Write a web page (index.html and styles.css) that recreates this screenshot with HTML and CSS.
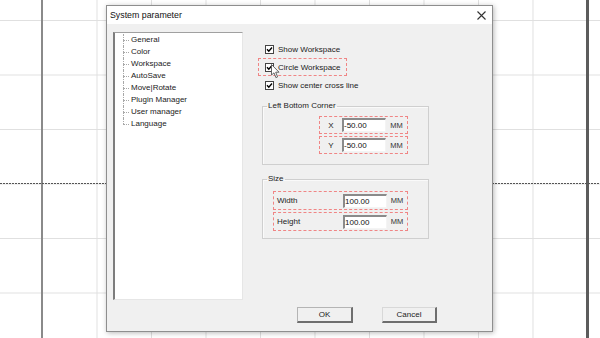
FILE: index.html
```html
<!DOCTYPE html>
<html>
<head>
<meta charset="utf-8">
<title>System parameter</title>
<link rel="stylesheet" href="styles.css">
</head>
<body>
<div class="desk">
  <div class="vline vline-left"></div>
  <div class="vline vline-right"></div>
  <div class="hdash"></div>

  <div class="dialog">
    <div class="titlebar">
      <span class="title">System parameter</span>
      <svg class="close" width="9" height="9" viewBox="0 0 9 9"><path d="M0.5 0.5 L8.5 8.5 M8.5 0.5 L0.5 8.5" stroke="#333" stroke-width="1.1" fill="none"/></svg>
    </div>
    <div class="body">
      <div class="main">
        <ul class="tree">
          <li>General</li>
          <li>Color</li>
          <li>Workspace</li>
          <li>AutoSave</li>
          <li>Move|Rotate</li>
          <li>Plugin Manager</li>
          <li>User manager</li>
          <li>Language</li>
        </ul>
        <div class="panel">
          <div class="check">
            <svg class="box" width="9" height="9" viewBox="0 0 9 9"><rect x="0.5" y="0.5" width="8" height="8" fill="#fff" stroke="#444"/><path d="M2 4.2 L3.8 6.2 L7 2.5" stroke="#000" stroke-width="1.4" fill="none"/></svg>
            <span>Show Workspace</span>
          </div>
          <div class="check focus">
            <svg class="box" width="9" height="9" viewBox="0 0 9 9"><rect x="0.5" y="0.5" width="8" height="8" fill="#fff" stroke="#444"/><path d="M2 4.2 L3.8 6.2 L7 2.5" stroke="#000" stroke-width="1.4" fill="none"/></svg>
            <span>Circle Workspace</span>
          </div>
          <div class="check">
            <svg class="box" width="9" height="9" viewBox="0 0 9 9"><rect x="0.5" y="0.5" width="8" height="8" fill="#fff" stroke="#444"/><path d="M2 4.2 L3.8 6.2 L7 2.5" stroke="#000" stroke-width="1.4" fill="none"/></svg>
            <span>Show center cross line</span>
          </div>

          <fieldset class="group group-corner">
            <legend>Left Bottom Corner</legend>
            <div class="field field-short">
              <span class="flabel center">X</span>
              <span class="input">-50.00</span>
              <span class="unit">MM</span>
            </div>
            <div class="field field-short">
              <span class="flabel center">Y</span>
              <span class="input">-50.00</span>
              <span class="unit">MM</span>
            </div>
          </fieldset>

          <fieldset class="group group-size">
            <legend>Size</legend>
            <div class="field field-long">
              <span class="flabel">Width</span>
              <span class="input">100.00</span>
              <span class="unit">MM</span>
            </div>
            <div class="field field-long">
              <span class="flabel">Height</span>
              <span class="input">100.00</span>
              <span class="unit">MM</span>
            </div>
          </fieldset>
        </div>
      </div>
      <div class="buttons">
        <button class="btn btn-ok">OK</button>
        <button class="btn btn-cancel">Cancel</button>
      </div>
    </div>
  </div>

  <svg class="cursor" width="10" height="15" viewBox="0 0 10 15"><path d="M0.5 0.5 L0.5 11 L3 8.8 L4.9 13.6 L6.6 12.9 L4.7 8.2 L8 8.2 Z" fill="#fff" stroke="#555" stroke-width="0.9" stroke-linejoin="round"/></svg>
</div>
</body>
</html>
```

FILE: styles.css
```css
html, body {
  margin: 0;
  padding: 0;
}

body {
  font-family: "Liberation Sans", Arial, sans-serif;
  background: #fff;
}

.desk {
  position: relative;
  width: 600px;
  height: 338px;
  overflow: hidden;
  background:
    linear-gradient(to right, #e0e0e0 1px, transparent 1px) 42px 0 / 54.5px 100%,
    linear-gradient(to bottom, #e0e0e0 1px, transparent 1px) 0 20px / 100% 54.5px,
    #fff;
}

.vline {
  position: absolute;
  top: 0;
  height: 338px;
}

.vline-left {
  left: 41px;
  width: 2px;
  background: #8a8a8a;
}

.vline-right {
  left: 586px;
  width: 3px;
  background: #5c5c5c;
}

.hdash {
  position: absolute;
  left: 0;
  top: 183px;
  width: 600px;
  height: 1px;
  background: repeating-linear-gradient(to right, #555 0 2px, transparent 2px 3px);
}

.dialog {
  position: absolute;
  left: 106px;
  top: 5px;
  width: 387px;
  height: 327px;
  box-sizing: border-box;
  border: 1px solid #8e8e8e;
  background: #f0f0f0;
  box-shadow: 1px 1px 5px rgba(0, 0, 0, 0.28);
  display: flex;
  flex-direction: column;
}

.titlebar {
  height: 18px;
  background: #fff;
  display: flex;
  align-items: center;
  justify-content: space-between;
  padding: 0 6px 0 3px;
}

.title {
  font-size: 8.8px;
  color: #111;
}

.close {
  display: block;
}

.body {
  flex: 1;
  display: flex;
  flex-direction: column;
  padding: 8px 6px 8px 6px;
}

.main {
  display: flex;
  height: 268px;
}

.tree {
  list-style: none;
  margin: 0;
  padding: 1px 0 0 0;
  width: 130px;
  height: 268px;
  box-sizing: border-box;
  background: #fff;
  border-top: 1px solid #a0a0a0;
  border-left: 2px solid #7d7d7d;
  border-right: 1px solid #e6e6e6;
  border-bottom: 1px solid #e6e6e6;
  font-size: 8px;
  color: #222;
}

.tree li {
  position: relative;
  height: 12px;
  line-height: 12px;
  padding-left: 16px;
}

.tree li::before {
  content: "";
  position: absolute;
  left: 8px;
  top: 6px;
  width: 6px;
  border-top: 1px dotted #a8a8a8;
}

.tree li::after {
  content: "";
  position: absolute;
  left: 8px;
  top: 0;
  height: 12px;
  border-left: 1px dotted #a8a8a8;
}

.tree li:last-child::after {
  height: 6px;
}

.panel {
  margin-left: 16px;
  padding-top: 8px;
  display: flex;
  flex-direction: column;
  align-items: flex-start;
  font-size: 8px;
  color: #222;
}

.check {
  height: 18px;
  box-sizing: border-box;
  display: flex;
  align-items: center;
  padding: 0 5px 0 6px;
  border: 1px solid transparent;
  margin-left: -1px;
}

.check .box {
  display: block;
  margin-right: 4px;
}

.check.focus {
  border: 1px dashed #f08585;
}

.group {
  margin: 7px 0 0 3px;
  width: 167px;
  box-sizing: border-box;
  border: 1px solid #cfcfcf;
  box-shadow: inset 1px 1px 0 #fafafa;
  display: flex;
  flex-direction: column;
  align-items: flex-end;
  gap: 2px;
  min-inline-size: 0;
}

.group legend {
  font-size: 8px;
  line-height: 10px;
  padding: 0 1px;
  margin-left: 4px;
  color: #222;
}

.group-corner {
  padding: 5px 20px 10px 0;
}

.group-size {
  margin-top: 9px;
  padding: 7px 20px 7px 0;
}

.field {
  display: flex;
  align-items: center;
  box-sizing: border-box;
  border: 1px dashed #f08585;
  height: 18px;
}

.field-long {
  height: 19px;
  width: 135px;
}

.field-short {
  width: 89px;
}

.flabel {
  flex: 1;
  padding-left: 3px;
}

.flabel.center {
  padding-left: 0;
  text-align: center;
}

.input {
  width: 44px;
  height: 14px;
  box-sizing: border-box;
  background: #fff;
  border-top: 2px solid #8a8a8a;
  border-left: 2px solid #8a8a8a;
  border-right: 1px solid #f4f4f4;
  border-bottom: 1px solid #f4f4f4;
  font-size: 8px;
  line-height: 11px;
  padding-left: 0;
  color: #111;
}

.unit {
  width: 20px;
  text-align: center;
  font-size: 7.5px;
  color: #333;
}

.field-short .unit {
  width: 21px;
}

.buttons {
  display: flex;
  margin-top: 7px;
  padding-left: 184px;
  gap: 29px;
}

.btn {
  height: 16px;
  box-sizing: border-box;
  margin: 0;
  padding: 0;
  background: #f0f0f0;
  border-top: 1px solid #b4b4b4;
  border-left: 1px solid #b4b4b4;
  border-right: 2px solid #6e6e6e;
  border-bottom: 2px solid #6e6e6e;
  font-family: "Liberation Sans", Arial, sans-serif;
  font-size: 8px;
  color: #222;
}

.btn-ok {
  width: 56px;
}

.btn-cancel {
  width: 55px;
  border-top-color: #d8d8d8;
  border-left-color: #d8d8d8;
}

.cursor {
  position: absolute;
  left: 271px;
  top: 64px;
}
```
